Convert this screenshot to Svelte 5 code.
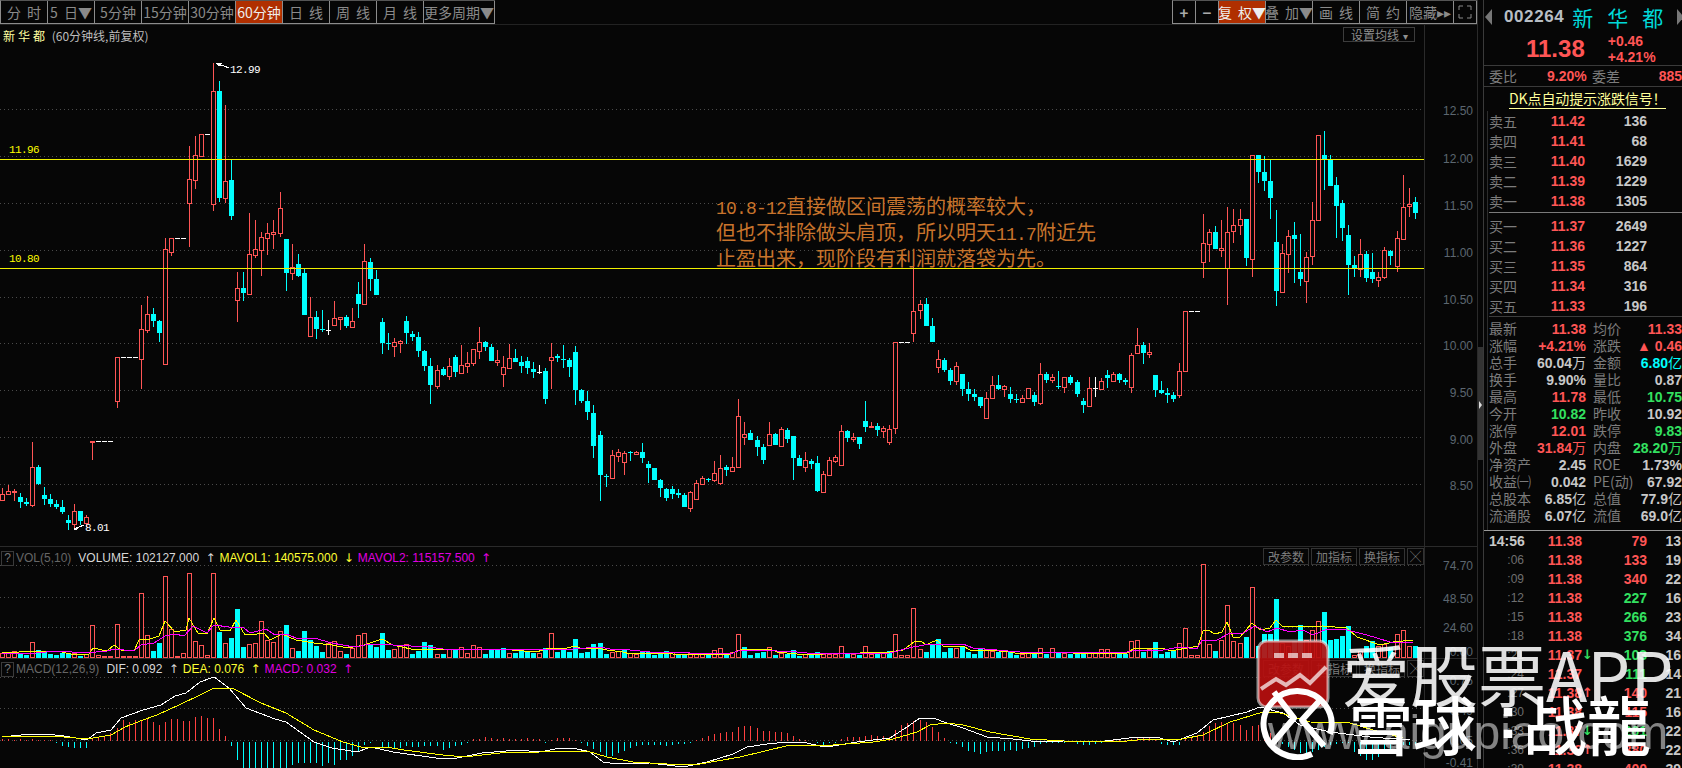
<script>
	// y values are page pixels: colour top bottom high low, one row per bar
	const raw = `r 494 500 488 500
r 491 494 485 494
r 491 492 489 501
c 497 502 493 508
c 502 504 498 506
r 467 505 442 507
c 467 484 465 485
c 495 499 487 505
c 499 504 494 507
c 504 507 500 509
c 507 512 500 514
c 520 523 515 530
r 511 524 504 528
c 511 521 511 525
r 517 523 515 527
r 441 442 441 460
w 441 441 441 441
w 441 441 441 441
w 441 441 441 441
r 357 401 357 408
w 357 357 357 357
w 357 357 357 357
w 357 357 357 357
r 329 359 305 389
r 314 330 296 333
c 314 321 308 327
c 321 333 320 342
r 249 364 238 364
r 238 252 238 256
w 238 238 238 238
w 238 238 238 238
r 179 203 146 247
r 155 180 136 189
r 134 156 134 156
w 134 134 134 134
r 91 204 63 211
c 91 198 81 202
r 181 198 105 203
c 180 216 160 220
r 288 300 272 322
c 288 293 272 301
r 254 294 213 295
r 249 255 220 258
r 237 250 232 276
r 233 238 223 255
r 232 234 220 249
r 208 233 192 237
c 239 273 239 291
r 267 273 244 280
c 264 276 254 277
c 273 315 269 315
r 317 336 297 336
c 317 329 311 339
c 329 330 310 332
w 330 330 320 335
r 318 325 301 325
r 317 319 317 330
c 317 326 315 328
r 321 327 308 328
c 294 304 282 318
r 261 304 244 305
c 262 279 258 291
c 279 295 270 295
c 322 343 318 354
c 343 344 333 350
r 342 346 338 357
r 341 343 340 353
c 321 333 316 344
c 334 337 331 341
c 337 351 332 357
c 351 366 350 371
c 366 385 358 404
r 370 386 365 389
c 369 375 367 376
r 366 376 358 380
c 357 372 355 377
r 365 373 345 373
r 363 366 352 373
r 349 363 349 366
r 342 351 327 359
c 342 347 341 351
c 347 361 344 361
r 360 362 350 366
r 367 374 356 387
r 358 368 344 369
c 358 362 349 362
c 362 366 356 373
c 361 368 357 374
c 369 372 362 378
w 372 372 365 374
c 371 399 368 404
r 357 360 343 389
c 356 358 354 362
c 359 360 345 368
c 360 367 358 377
c 352 390 346 405
c 390 401 389 403
c 401 412 391 420
c 413 446 405 458
c 435 475 431 501
c 476 477 474 487
r 455 478 450 478
r 452 456 449 462
r 453 462 451 475
c 452 453 451 461
r 452 454 451 455
c 452 458 443 463
c 464 468 461 483
c 468 480 468 480
c 480 488 479 497
c 489 498 488 501
c 489 494 486 499
c 493 495 489 498
c 495 507 493 507
r 492 508 491 512
r 483 499 480 499
r 478 484 476 484
c 479 480 478 482
r 473 480 461 482
r 468 483 455 485
c 467 470 465 476
r 467 471 457 471
r 416 467 399 467
r 434 437 422 445
c 433 440 430 440
c 440 447 436 456
c 447 460 444 464
r 434 445 422 446
c 434 445 433 445
r 429 446 427 446
c 430 439 428 443
c 436 458 436 480
c 458 466 455 466
r 460 467 452 472
c 461 464 459 469
c 463 491 456 492
r 474 492 471 492
r 460 475 457 475
r 457 461 455 463
r 431 465 425 466
c 431 438 430 442
r 437 439 433 442
c 437 444 437 449
c 421 427 401 432
r 426 427 422 427
c 426 430 423 436
r 428 431 426 438
r 429 442 425 445
r 342 428 342 434
w 342 342 342 342
w 342 342 342 342
r 311 333 267 342
r 304 310 300 319
c 304 326 298 326
c 326 342 318 342
r 359 367 350 373
c 360 370 358 372
c 370 381 368 385
r 366 381 362 385
c 374 389 374 396
c 389 394 382 401
c 394 397 389 401
c 397 406 397 408
r 398 418 392 419
r 385 398 376 398
c 385 389 375 390
r 386 389 385 397
c 394 399 387 403
c 399 400 394 403
r 398 402 395 402
r 388 398 388 398
c 395 402 392 406
r 374 403 363 405
c 374 380 372 383
r 377 380 374 383
c 386 387 371 389
r 377 387 377 393
c 377 383 375 385
c 382 394 380 397
c 401 405 398 413
r 388 406 377 406
w 388 388 377 397
r 381 389 378 389
c 375 378 370 388
r 374 381 372 381
c 374 380 373 383
c 380 382 378 385
r 355 387 353 393
r 345 353 328 354
c 345 353 342 364
r 352 354 343 358
c 375 390 375 397
c 390 393 381 394
c 393 395 388 403
c 395 399 392 402
r 371 395 363 398
r 311 371 311 372
w 311 311 311 311
w 311 311 311 311
r 243 262 214 278
r 232 244 229 262
c 232 249 226 249
r 248 250 220 257
r 232 268 207 305
r 225 231 209 243
r 219 225 209 235
c 219 258 219 266
r 155 259 155 277
c 155 172 155 183
c 172 181 156 191
c 181 198 160 219
c 242 291 210 306
r 253 292 244 292
r 236 254 230 273
c 235 239 222 283
c 272 279 234 286
r 257 281 252 303
r 220 256 202 265
r 135 220 135 220
c 155 159 131 190
c 159 186 155 186
c 185 206 177 238
c 203 228 200 241
c 235 265 225 295
c 265 268 256 277
r 254 269 239 277
c 254 278 251 282
c 272 279 253 283
r 277 280 272 287
r 250 277 247 279
c 251 256 250 265
r 238 266 231 272
r 207 239 175 239
r 204 206 188 217
c 202 213 197 219`;

	const barX = (i) => Math.floor(2.3 + 6.0377 * i) + 0.5;

	const candles = raw.split('\n').map((row, i) => {
		const [kind, top, bot, hi, lo] = row.split(' ');
		return { kind, x: barX(i), top: +top, bot: +bot, hi: +hi, lo: +lo };
	});

	// volume height in pixels, cyan bars negative
	const volume = [4,4,6,-5,-3,15,-8,-6,-4,-3,-5,-4,4,-2,3,32,2,1,1,33,1,1,1,64,22,-7,-15,81,28,1,4,84,16,12,2,84,-26,14,-20,-49,-11,13,14,36,17,15,26,-33,9,-7,-27,-18,-12,-6,14,16,6,-4,9,22,24,-13,-11,-25,-8,8,11,13,-4,-7,-16,-13,3,-4,8,-8,10,4,12,10,-4,-8,-9,-10,4,-5,-7,-7,-5,4,-10,24,-6,-10,-6,-19,-5,-6,-14,-15,-4,5,6,-8,4,3,-6,-6,-3,-6,-7,5,-3,-3,4,4,4,-4,7,9,-3,5,23,-11,-3,-5,-6,10,-3,4,-4,-8,-2,3,-3,-6,3,3,3,11,-4,3,-3,11,3,-4,5,-7,23,2,2,49,8,-6,-14,-19,-6,-10,9,-11,-6,-4,-9,8,6,-6,6,-6,-3,3,4,-4,9,-4,9,-6,4,-4,-6,-4,4,4,8,8,5,-4,-4,16,17,-6,8,-16,-4,-6,-8,14,29,2,2,93,13,-7,17,52,16,14,-21,70,-12,-24,-24,-59,14,11,-17,-33,17,27,36,-46,-18,-19,-22,-32,2,6,-12,-17,11,13,-11,23,27,11,-12];

	const histogram = [2,2,1,2,1,2,1,1,1,-1,-4,-5,-6,-6,-6,2,4,5,8,13,21,19,21,21,23,19,16,19,22,22,20,20,24,25,23,23,12,5,-4,-18,-26,-26,-26,-26,-26,-26,-26,-26,-23,-21,-21,-21,-21,-24,-21,-23,-18,-18,-14,-9,-3,-1,0,-6,-6,-6,-6,-4,-5,-5,-4,-4,-4,-8,-6,-4,-3,-1,2,2,4,3,2,3,2,2,2,3,2,2,-1,1,3,3,3,1,-1,-4,-7,-10,-15,-14,-11,-9,-6,-4,-3,-3,-3,-3,-4,-3,-2,-2,-1,1,3,5,7,8,9,9,14,15,15,13,10,10,9,9,8,5,2,1,0,-1,-3,-1,-1,2,4,4,4,5,6,5,5,4,11,16,18,20,21,19,14,9,3,-1,-2,-5,-9,-10,-12,-10,-9,-9,-9,-8,-9,-7,-6,-5,-2,-1,-1,-1,-1,0,-2,-3,-3,-2,-1,1,1,1,1,2,3,3,3,1,-2,-3,-3,-3,2,4,6,9,15,18,19,18,18,16,11,15,16,14,8,4,-2,-5,-8,-11,-12,-10,-8,-5,-3,-2,-1,-1,-10,-14,-18,-18,-15,-12,-8,-5,-3,-3,-3];

	const volYellow = '2,653 36,651 57,651 71,654 89,654 93,648 107,651 114,645 121,650 134,651 139,640 150,639 159,636 165,621 175,632 186,630 189,618 198,633 207,634 214,618 220,630 230,631 236,620 245,635 257,634 264,633 270,640 282,634 296,640 314,643 332,645 348,648 364,645 382,639 393,645 411,649 436,650 464,649 500,649 536,652 550,648 567,648 575,646 583,649 597,648 607,650 623,652 630,654 653,653 673,654 707,654 730,654 740,650 770,649 777,652 797,654 823,654 860,653 867,652 873,653 890,652 903,650 910,645 915,641 920,641 927,645 930,643 937,640 943,646 963,646 970,650 987,650 1010,652 1020,654 1067,652 1073,653 1127,653 1133,649 1163,648 1170,651 1193,647 1198,646 1203,631 1208,630 1215,634 1222,632 1227,622 1233,637 1240,637 1252,623 1260,630 1270,628 1276,620 1283,627 1323,626 1347,628 1357,637 1380,645 1393,642 1413,640';
	const volMagenta = '2,653 36,653 57,651 86,653 107,651 114,649 134,651 141,645 154,643 165,636 175,634 184,636 193,626 207,633 214,625 229,627 243,627 250,633 266,629 275,635 286,634 296,638 314,638 332,643 354,647 371,644 393,645 429,647 443,649 536,650 553,649 573,649 600,647 610,649 630,650 650,652 673,652 707,654 733,653 740,650 777,651 797,652 807,653 840,654 890,653 913,647 930,644 963,644 973,648 1020,652 1127,652 1137,650 1163,650 1180,647 1197,649 1202,640 1217,640 1230,633 1243,633 1255,626 1267,632 1277,628 1290,632 1303,630 1313,635 1327,629 1347,630 1367,635 1390,642 1413,643';
	const dif = '2,737 21,735 46,734 64,736 87,740 96,733 111,730 121,718 143,710 161,705 175,696 186,693 200,682 214,677 229,688 246,708 275,719 286,722 314,742 332,748 357,752 371,747 393,752 436,758 457,758 482,753 518,750 540,752 560,748 573,748 590,752 603,762 617,764 650,763 683,767 707,762 733,754 747,747 767,744 787,742 807,743 820,746 833,746 857,742 890,738 907,727 920,718 933,718 947,723 963,728 987,737 1013,739 1040,742 1063,741 1097,742 1137,737 1157,737 1173,742 1197,733 1213,720 1247,712 1260,707 1283,713 1300,725 1330,732 1370,737 1410,740';
	const dea = '2,736 46,736 64,737 87,739 111,735 125,727 143,720 157,715 179,705 200,695 214,688 232,688 261,703 286,713 314,730 343,742 361,747 386,747 404,750 443,755 464,757 500,753 540,752 587,751 607,757 633,762 667,764 700,764 740,757 790,745 833,745 873,742 893,739 917,732 930,725 947,723 963,725 990,732 1030,739 1063,741 1117,742 1147,739 1177,740 1203,735 1230,722 1263,712 1277,712 1310,722 1350,723 1373,730 1403,738';

	const priceTicks = [
		['12.50', 110], ['12.00', 158], ['11.50', 205], ['11.00', 252], ['10.50', 299],
		['10.00', 345], ['9.50', 392], ['9.00', 439], ['8.50', 485]
	];
	const priceGrid = [109, 156, 203, 250, 297, 343, 390, 437, 484];

	const periodTabs = ['分 时', '5 日▼', '5分钟', '15分钟', '30分钟', '60分钟', '日 线', '周 线', '月 线', '更多周期▼'];

	const asks = [['卖五', '11.42', '136'], ['卖四', '11.41', '68'], ['卖三', '11.40', '1629'], ['卖二', '11.39', '1229'], ['卖一', '11.38', '1305']];
	const bids = [['买一', '11.37', '2649'], ['买二', '11.36', '1227'], ['买三', '11.35', '864'], ['买四', '11.34', '316'], ['买五', '11.33', '196']];

	const stats = [
		['最新', '11.38', 'up', '均价', '11.33', 'up'],
		['涨幅', '+4.21%', 'up', '涨跌', '▲ 0.46', 'up'],
		['总手', '60.04万', '', '金额', '6.80亿', 'cy'],
		['换手', '9.90%', '', '量比', '0.87', ''],
		['最高', '11.78', 'up', '最低', '10.75', 'dn'],
		['今开', '10.82', 'dn', '昨收', '10.92', ''],
		['涨停', '12.01', 'up', '跌停', '9.83', 'dn'],
		['外盘', '31.84万', 'up', '内盘', '28.20万', 'dn'],
		['净资产', '2.45', '', 'ROE', '1.73%', ''],
		['收益㈠', '0.042', '', 'PE(动)', '67.92', ''],
		['总股本', '6.85亿', '', '总值', '77.9亿', ''],
		['流通股', '6.07亿', '', '流值', '69.0亿', '']
	];

	const ticks = [
		['14:56', '11.38', '', '79', 'up', '13'],
		[':06', '11.38', '', '133', 'up', '19'],
		[':09', '11.38', '', '340', 'up', '22'],
		[':12', '11.38', '', '227', 'dn', '16'],
		[':15', '11.38', '', '266', 'dn', '23'],
		[':18', '11.38', '', '376', 'dn', '34'],
		[':21', '11.37', '↓', '103', 'dn', '16'],
		[':24', '11.37', '', '111', 'dn', '14'],
		[':27', '11.38', '↑', '140', 'up', '21'],
		[':30', '11.38', '', '115', 'up', '16'],
		[':33', '11.37', '↓', '201', 'dn', '22'],
		[':36', '11.38', '↑', '380', 'up', '22'],
		[':39', '11.38', '', '400', 'up', '39']
	];

	const splitUnit = (v) => (/[万亿]$/.test(v) ? [v.slice(0, -1), v.slice(-1)] : [v, '']);
</script>

<div class="screen">
	<div class="main">
		<div class="toolbar">
			<div class="tabs">
				{#each periodTabs as tab, i}
					<span class="tab" class:wide={i === 9} class:on={i === 5}>{tab}</span>
				{/each}
			</div>
			<div class="tabs right">
				<span class="tab mini strong">+</span>
				<span class="tab mini strong">−</span>
				<span class="tab on">复 权▼</span>
				<span class="tab">叠 加▼</span>
				<span class="tab">画 线</span>
				<span class="tab">简 约</span>
				<span class="tab">隐藏▸▸</span>
				<span class="tab mini">
					<svg width="14" height="14" viewBox="0 0 14 14" fill="none" stroke="#8a8a8a">
						<path d="M1 5V1h4M9 1h4v4M13 9v4H9M5 13H1V9" />
					</svg>
				</span>
			</div>
		</div>

		<div class="panel price">
			<svg class="chart" width="1477" height="521" viewBox="0 25 1477 521">
				{#each priceGrid as y}
					<line class="dots" x1="0" x2="1424" y1={y + 0.5} y2={y + 0.5} />
				{/each}
				{#each candles as k}
					{#if k.kind === 'w'}
						<line class="white" x1={k.x} x2={k.x} y1={k.hi} y2={k.lo} />
						<line class="white" x1={k.x - 2.5} x2={k.x + 2.5} y1={k.top + 0.5} y2={k.top + 0.5} />
					{:else if k.kind === 'r'}
						<line class="red" x1={k.x} x2={k.x} y1={k.hi} y2={k.lo} />
						<rect class="red hollow" x={k.x - 2} y={k.top + 0.5} width="4" height={k.bot - k.top} />
					{:else}
						<line class="cyan" x1={k.x} x2={k.x} y1={k.hi} y2={k.lo} />
						<rect class="solid" x={k.x - 2.5} y={k.top} width="5" height={k.bot - k.top} />
					{/if}
				{/each}
				<line class="level" x1="0" x2="1424" y1="159.5" y2="159.5" />
				<line class="level" x1="0" x2="1424" y1="268.5" y2="268.5" />
				<text class="lv" x="9" y="153">11.96</text>
				<text class="lv" x="9" y="262">10.80</text>
				<polygon class="mark" points="215,63 222,63 219,67" />
				<polyline class="markline" points="219,65 224,66 229,68" />
				<text class="lo-hi" x="230" y="73">12.99</text>
				<polygon class="mark" points="72,530 79,528 76,530" />
				<polyline class="markline" points="74,529 84,525" />
				<text class="lo-hi" x="85" y="531">8.01</text>
				<line class="axis" x1="1424.5" x2="1424.5" y1="25" y2="546" />
				{#each priceTicks as [label, y]}
					<text class="scale" x="1473" y={y + 4.5}>{label}</text>
				{/each}
			</svg>
			<div class="caption"><b>新华都</b> (60分钟线,前复权)</div>
			<div class="ma-btn">设置均线<i>▾</i></div>
			<div class="note">
				<p><span class="lat">10.8-12</span>直接做区间震荡的概率较大，</p>
				<p>但也不排除做头肩顶，所以明天<span class="lat">11.7</span>附近先</p>
				<p>止盈出来，现阶段有利润就落袋为先。</p>
			</div>
		</div>

		<div class="panel vol">
			<svg class="chart" width="1477" height="111" viewBox="0 547 1477 111">
				{#each [565, 597, 627] as y}
					<line class="dots" x1="0" x2="1424" y1={y + 0.5} y2={y + 0.5} />
				{/each}
				{#each volume as v, i}
					{#if v > 0}
						<rect class="red hollow" x={barX(i) - 2} y={657.5 - v} width="4" height={v} />
					{:else}
						<rect class="solid" x={barX(i) - 2.5} y={658 + v} width="5" height={-v} />
					{/if}
				{/each}
				<polyline class="ma yellow" points={volYellow} />
				<polyline class="ma magenta" points={volMagenta} />
				<line class="axis" x1="1424.5" x2="1424.5" y1="547" y2="658" />
				<text class="scale" x="1473" y="570">74.70</text>
				<text class="scale" x="1473" y="603">48.50</text>
				<text class="scale" x="1473" y="632">24.60</text>
				<text class="scale" x="1473" y="656">0.00</text>
			</svg>
			<div class="legend">
				<span class="help">?</span>
				<span class="dim">VOL(5,10)</span>
				<span class="w">VOLUME: 102127.000 <i>↑</i></span>
				<span class="y">MAVOL1: 140575.000 <i>↓</i></span>
				<span class="m">MAVOL2: 115157.500 <i>↑</i></span>
			</div>
			<div class="tools">
				<span>改参数</span><span>加指标</span><span>换指标</span><span class="x">╳</span>
			</div>
		</div>

		<div class="panel macd">
			<svg class="chart" width="1477" height="110" viewBox="0 658 1477 110">
				<line class="split" x1="0" x2="1477" y1="658.5" y2="658.5" />
				{#each [677, 708, 740] as y}
					<line class="dots" x1="0" x2="1424" y1={y + 0.5} y2={y + 0.5} />
				{/each}
				{#each histogram as v, i}
					{#if v > 0}
						<line class="hist-up" x1={barX(i)} x2={barX(i)} y1={741 - v} y2="741" />
					{:else if v < 0}
						<line class="cyan" x1={barX(i)} x2={barX(i)} y1="742" y2={742 - v} />
					{/if}
				{/each}
				<polyline class="ma white-line" points={dif} />
				<polyline class="ma yellow" points={dea} />
				<line class="axis" x1="1424.5" x2="1424.5" y1="658" y2="768" />
				<text class="scale" x="1473" y="685">0.75</text>
				<text class="scale" x="1473" y="715">0.49</text>
				<text class="scale" x="1473" y="745">0.05</text>
				<text class="scale" x="1473" y="767">-0.41</text>
			</svg>
			<div class="legend">
				<span class="help">?</span>
				<span class="dim">MACD(12,26,9)</span>
				<span class="w">DIF: 0.092 <i>↑</i></span>
				<span class="y">DEA: 0.076 <i>↑</i></span>
				<span class="m">MACD: 0.032 <i>↑</i></span>
			</div>
			<div class="tools">
				<span>改参数</span><span>加指标</span><span>换指标</span><span class="x">╳</span>
			</div>
		</div>
	</div>

	<div class="rail">
		<div class="thumb"><i></i></div>
	</div>

	<aside class="side">
		<div class="stock">
			<i class="prev"></i>
			<span class="code">002264</span>
			<span class="name">新华都</span>
			<i class="next"></i>
		</div>
		<div class="quote">
			<span class="big">11.38</span>
			<div class="delta"><span>+0.46</span><span>+4.21%</span></div>
		</div>
		<div class="ratio">
			<span class="lb">委比</span><b class="up">9.20%</b><span class="lb">委差</span><b class="up last">885</b>
		</div>
		<div class="promo"><span>DK点自动提示涨跌信号！</span></div>

		<div class="inner">
			<div class="book">
				{#each asks as [label, price, size]}
					<div class="level-row"><span class="lb">{label}</span><b class="up">{price}</b><b>{size}</b></div>
				{/each}
			</div>
			<div class="book bids">
				{#each bids as [label, price, size]}
					<div class="level-row"><span class="lb">{label}</span><b class="up">{price}</b><b>{size}</b></div>
				{/each}
			</div>
			<div class="stats">
				{#each stats as [l1, v1, c1, l2, v2, c2]}
					{@const a = splitUnit(v1)}
					{@const b = splitUnit(v2)}
					<div class="stat-row">
						<span class="lb">{l1}</span>
						<b class={c1}>{a[0]}<small>{a[1]}</small></b>
						<span class="lb">{l2}</span>
						<b class={c2}>{b[0]}<small>{b[1]}</small></b>
					</div>
				{/each}
			</div>
		</div>

		<div class="deals">
			{#each ticks as [time, price, arrow, size, tone, count], i}
				<div class="deal">
					<span class="time" class:first={i === 0}>{time}</span>
					<b class="up">{price}</b>
					<i class={arrow === '↑' ? 'up' : 'dn'}>{arrow}</i>
					<b class={tone}>{size}</b>
					<b>{count}</b>
				</div>
			{/each}
		</div>
	</aside>

	<div class="stamp" aria-hidden="true">
		<div class="url">www.aigupiao.com</div>
		<svg class="app" width="74" height="70" viewBox="0 0 74 70">
			<rect x="2" y="2" width="70" height="66" rx="9" fill="#b80f0f" fill-opacity="0.92" stroke="#fff" stroke-opacity="0.55" stroke-width="3" />
			<path d="M18 14h10v5H18zM32 14h10v5H32zM46 14h10v5H46z" fill="#fff" fill-opacity="0.65" />
			<polyline points="5,50 20,40 30,46 44,36 54,44 70,28" fill="none" stroke="#fff" stroke-opacity="0.7" stroke-width="4" />
		</svg>
		<svg class="ring" width="78" height="76" viewBox="0 0 78 76" fill="none" stroke="#fff" stroke-width="6">
			<path d="M54 70A34 33 0 1 1 72 50" />
			<path d="M16 8L36 34L14 60" stroke-linejoin="round" />
			<path d="M64 14L44 36L66 62" stroke-linejoin="round" />
		</svg>
		<div class="brand">爱股票APP</div>
		<div class="sign">雪球<em>:</em>战龍</div>
	</div>
</div>

<style>
	:global(body) {
		margin: 0;
		background: #060606;
	}

	.screen {
		position: relative;
		display: flex;
		width: 1682px;
		height: 768px;
		overflow: hidden;
		background: #060606;
		color: #c8c8c8;
		font-family: 'Liberation Sans', 'Noto Sans CJK SC', sans-serif;
	}

	.main {
		display: flex;
		flex-direction: column;
		width: 1477px;
		flex: none;
	}

	.toolbar {
		display: flex;
		justify-content: space-between;
		height: 25px;
		border-bottom: 1px solid #222;
		box-sizing: border-box;
	}

	.tabs {
		display: flex;
		height: 24px;
		box-sizing: border-box;
		border: 1px solid #8c8c8c;
		border-top-color: #555;
		border-right: 0;
	}

	.tab {
		display: flex;
		align-items: center;
		justify-content: center;
		width: 46px;
		border-right: 1px solid #8c8c8c;
		color: #8a8a8a;
		font-size: 14px;
		word-spacing: 3px;
		white-space: nowrap;
		font-family: 'Noto Sans CJK SC', sans-serif;
	}

	.tab.wide {
		width: 70px;
	}

	.tab.mini {
		width: 22px;
	}

	.tab.strong {
		font-weight: 700;
		color: #aaa;
		font-size: 15px;
	}

	.tab.on {
		background: #b02f00;
		color: #eee;
	}

	.panel {
		position: relative;
		flex: none;
	}

	.chart {
		display: block;
		shape-rendering: crispEdges;
	}

	.dots {
		stroke: #4a4a4a;
		stroke-dasharray: 1 3;
	}

	.axis {
		stroke: #2a2a2a;
	}

	.split {
		stroke: #2a2a2a;
	}

	.red {
		stroke: #ff5555;
	}

	.hollow {
		fill: #060606;
	}

	.cyan {
		stroke: #00ffff;
	}

	.solid {
		fill: #00ffff;
	}

	.white {
		stroke: #fff;
	}

	.hist-up {
		stroke: #ff4040;
	}

	.level {
		stroke: #f0f000;
	}

	.ma {
		fill: none;
	}

	.yellow {
		stroke: #ffff00;
	}

	.magenta {
		stroke: #ff00ff;
	}

	.white-line {
		stroke: #fff;
	}

	.lv {
		fill: #ffff00;
		font: 11px 'Liberation Mono', monospace;
		letter-spacing: -0.6px;
	}

	.lo-hi {
		fill: #fff;
		font: 11px 'Liberation Mono', monospace;
		letter-spacing: -0.6px;
	}

	.mark {
		fill: #fff;
	}

	.markline {
		fill: none;
		stroke: #fff;
	}

	.scale {
		fill: #5c6670;
		font: 12px 'Liberation Sans', sans-serif;
		text-anchor: end;
		shape-rendering: auto;
	}

	.panel.price {
		height: 521px;
		border-bottom: 1px solid #2a2a2a;
	}

	.panel.vol {
		height: 111px;
	}

	.panel.macd {
		height: 110px;
	}

	.caption {
		position: absolute;
		left: 3px;
		top: 2px;
		font-size: 12px;
		line-height: 17px;
		color: #bdbdbd;
		font-family: 'Noto Sans CJK SC', sans-serif;
	}

	.caption b {
		font-weight: 400;
		color: #ffffa0;
		letter-spacing: 3px;
		margin-right: 1px;
	}

	.ma-btn {
		position: absolute;
		left: 1343px;
		top: 2px;
		width: 72px;
		height: 15px;
		box-sizing: border-box;
		border: 1px solid #3c3c3c;
		padding-left: 7px;
		color: #8f8f8f;
		font: 12px/13px 'Noto Sans CJK SC', sans-serif;
	}

	.ma-btn i {
		font-style: normal;
		margin-left: 4px;
		font-size: 10px;
	}

	.note {
		position: absolute;
		left: 716px;
		top: 168px;
		color: #c8742c;
		font: 20px/26px 'Noto Sans CJK SC', sans-serif;
		white-space: nowrap;
	}

	.note p {
		display: flex;
		align-items: baseline;
		height: 26px;
		margin: 0;
	}

	.lat {
		font-family: 'Liberation Mono', monospace;
		font-size: 18px;
		letter-spacing: -0.8px;
	}

	.legend {
		position: absolute;
		left: 1px;
		top: 3px;
		display: flex;
		align-items: center;
		gap: 4px;
		font-size: 12px;
		line-height: 16px;
		white-space: nowrap;
	}

	.legend i {
		font-style: normal;
		font-family: 'DejaVu Sans', sans-serif;
		font-size: 12px;
		margin-left: 3px;
	}

	.help {
		width: 11px;
		height: 13px;
		border: 1px solid #3a3a3a;
		color: #777;
		text-align: center;
		font-size: 12px;
		line-height: 13px;
		margin-right: -2px;
	}

	.dim {
		color: #666;
		margin-right: 3px;
	}

	.w {
		color: #d8d8d8;
	}

	.y {
		color: #ffff33;
	}

	.m {
		color: #e000e0;
	}

	.tools {
		position: absolute;
		left: 1263px;
		top: 1px;
		display: flex;
		gap: 2px;
	}

	.tools span {
		width: 44px;
		height: 15px;
		border: 1px solid #333;
		color: #7e7e7e;
		text-align: center;
		font: 12px/15px 'Noto Sans CJK SC', sans-serif;
	}

	.tools .x {
		width: 15px;
		font-size: 11px;
		color: #9a9a9a;
	}

	.macd .tools {
		top: 2px;
	}

	.rail {
		flex: none;
		width: 5px;
		padding-top: 347px;
		border-left: 1px solid #2a2a2a;
		box-sizing: content-box;
	}

	.thumb {
		position: relative;
		height: 113px;
		background: #333;
	}

	.thumb i {
		position: absolute;
		left: 1px;
		top: 54px;
		border-left: 3px solid #ddd;
		border-top: 4px solid transparent;
		border-bottom: 4px solid transparent;
	}

	.side {
		flex: none;
		width: 199px;
		overflow: hidden;
		border-left: 1px solid #3a3a3a;
		box-sizing: border-box;
		font-size: 14px;
	}

	.side b {
		font-weight: 700;
		color: #c8c8c8;
		white-space: nowrap;
	}

	.side .up {
		color: #ff5555;
	}

	.side .dn {
		color: #33e060;
	}

	.side .cy {
		color: #00ffff;
	}

	.lb {
		color: #7c7c7c;
		font-family: 'Noto Sans CJK SC', sans-serif;
		white-space: nowrap;
	}

	.stock {
		display: flex;
		align-items: center;
		height: 33px;
		padding-left: 1px;
	}

	.prev,
	.next {
		flex: none;
		border-top: 8px solid transparent;
		border-bottom: 8px solid transparent;
	}

	.prev {
		border-right: 7px solid #777;
	}

	.next {
		margin-left: 14px;
		border-left: 7px solid #777;
	}

	.code {
		margin-left: 12px;
		font-size: 17px;
		font-weight: 700;
		letter-spacing: 0.6px;
		color: #b8bec4;
	}

	.name {
		margin-left: 8px;
		color: #00d8d8;
		font: 21px/24px 'Noto Sans CJK SC', sans-serif;
		letter-spacing: 14px;
		margin-right: -14px;
		white-space: nowrap;
	}

	.quote {
		display: flex;
		height: 32px;
		padding-left: 42px;
		gap: 23px;
		border-bottom: 1px solid #3a3a3a;
		color: #ff5555;
		font-weight: 700;
	}

	.big {
		font-size: 24px;
		line-height: 32px;
	}

	.delta {
		display: flex;
		flex-direction: column;
		font-size: 14px;
		line-height: 16px;
	}

	.ratio {
		display: grid;
		grid-template-columns: 58px 45px 40px 1fr;
		align-items: center;
		height: 20px;
		padding-left: 5px;
		border-bottom: 1px solid #3a3a3a;
		font-size: 14px;
	}

	.ratio .last {
		justify-self: end;
	}

	.promo {
		height: 24px;
		padding-left: 25px;
		color: #ffff99;
		font: 14px/22px 'Noto Sans CJK SC', sans-serif;
	}

	.promo span {
		border-bottom: 1px solid #ffff99;
		letter-spacing: -0.1px;
	}

	.inner {
		margin-left: 3px;
		border-left: 1px solid #2c2c2c;
		padding-left: 1px;
		height: 419px;
		box-sizing: border-box;
	}

	.book {
		height: 101px;
		border-bottom: 1px solid #7a7a7a;
	}

	.book.bids {
		padding-top: 3px;
		height: 100px;
		border-bottom-color: #3c3c3c;
	}

	.level-row {
		display: grid;
		grid-template-columns: 41px 55px 62px;
		align-items: center;
		height: 20px;
	}

	.level-row b {
		justify-self: end;
	}

	.stats {
		padding-top: 1px;
	}

	.stat-row {
		display: grid;
		grid-template-columns: 42px 55px 7px 40px 49px;
		align-items: center;
		height: 17px;
	}

	.stat-row b {
		justify-self: end;
	}

	.stat-row .lb:nth-of-type(2) {
		grid-column: 4;
	}

	.stat-row small {
		font-family: 'Noto Sans CJK SC', sans-serif;
		font-size: 14px;
		font-weight: 400;
	}

	.deals {
		border-top: 1px solid #9a9a9a;
	}

	.deal {
		display: grid;
		grid-template-columns: 40px 58px 10px 55px 34px;
		align-items: center;
		height: 19px;
	}

	.deal b {
		justify-self: end;
	}

	.deal i {
		font: 700 13px 'DejaVu Sans', sans-serif;
	}

	.time {
		justify-self: end;
		color: #6f6f6f;
		font-size: 12px;
	}

	.time.first {
		color: #c8c8c8;
		font-weight: 700;
		font-size: 14px;
		justify-self: start;
		margin-left: 5px;
	}

	.stamp {
		position: absolute;
		inset: 0;
		pointer-events: none;
	}

	.url {
		position: absolute;
		left: 1268px;
		top: 706px;
		font-size: 48px;
		line-height: 54px;
		color: rgba(255, 255, 255, 0.5);
		filter: blur(0.6px);
	}

	.app {
		position: absolute;
		left: 1256px;
		top: 639px;
	}

	.ring {
		position: absolute;
		left: 1258px;
		top: 684px;
	}

	.brand {
		position: absolute;
		left: 1342px;
		top: 634px;
		font: 68px/78px 'Noto Sans CJK SC', sans-serif;
		color: rgba(255, 255, 255, 0.88);
		filter: blur(0.5px);
		white-space: nowrap;
	}

	.sign {
		position: absolute;
		left: 1349px;
		top: 683px;
		display: flex;
		font: 500 64px/78px 'Noto Sans CJK SC', sans-serif;
		color: #fff;
		white-space: nowrap;
	}

	.sign em {
		width: 46px;
		text-align: center;
		font: 700 60px/70px 'Liberation Sans', sans-serif;
		padding-left: 16px;
		box-sizing: border-box;
	}
</style>
